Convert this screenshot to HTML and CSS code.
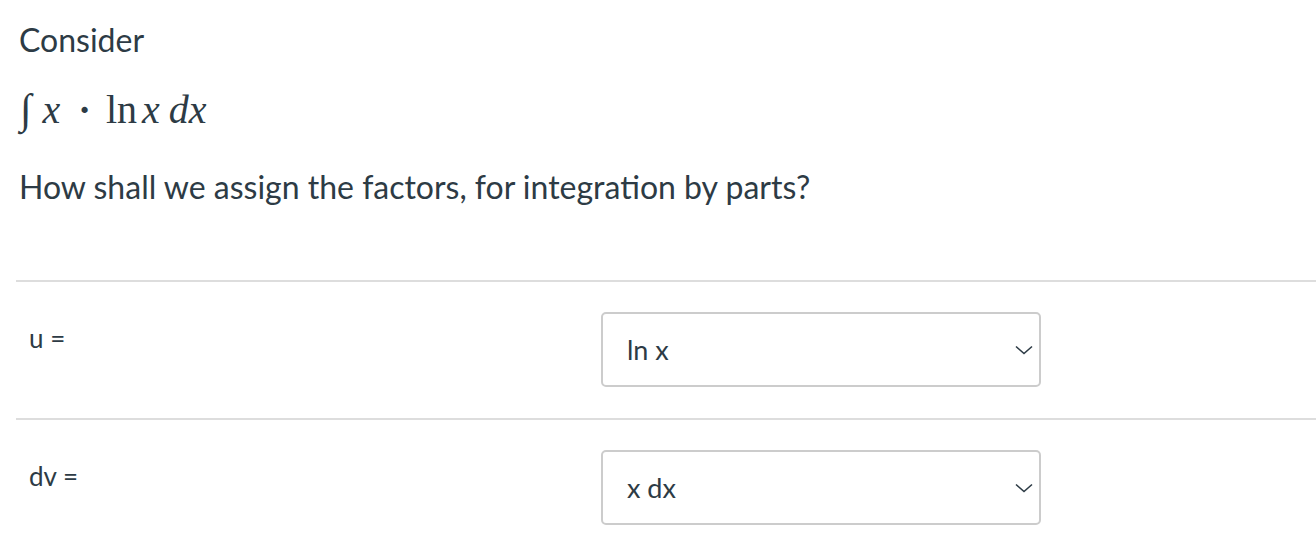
FILE: index.html
```html
<!DOCTYPE html>
<html>
<head>
<meta charset="utf-8">
<link rel="stylesheet" href="styles.css">
</head>
<body>
<div class="page">
  <p class="text consider">Consider</p>
  <p class="math"><span class="int">∫</span><i>x</i><span class="dot">·</span><span class="ln">ln</span><i>x</i><span class="sp"></span><i>dx</i></p>
  <p class="text question">How shall we assign the factors, for integration by parts?</p>
  <div class="rows">
    <div class="row">
      <div class="label">u =</div>
      <div class="select"><span class="value">ln x</span>
        <svg class="chev" width="18" height="10" viewBox="0 0 18 10"><path d="M1 1.5 L9 8.5 L17 1.5" fill="none" stroke="#2d3b45" stroke-width="1.6"/></svg>
      </div>
    </div>
    <div class="row">
      <div class="label">dv =</div>
      <div class="select"><span class="value">x dx</span>
        <svg class="chev" width="18" height="10" viewBox="0 0 18 10"><path d="M1 1.5 L9 8.5 L17 1.5" fill="none" stroke="#2d3b45" stroke-width="1.6"/></svg>
      </div>
    </div>
  </div>
</div>
</body>
</html>
```

FILE: styles.css
```css
html, body {
  margin: 0;
  padding: 0;
  background: #fff;
}
.page {
  padding: 20px 0 0 16px;
  color: #2d3b45;
  font-family: Lato, "Liberation Sans", sans-serif;
}
.text {
  margin: 0 0 0 3px;
  font-size: 32px;
  line-height: 40px;
}
.math {
  margin: 29px 0 0 4px;
  font-family: "Liberation Serif", serif;
  font-size: 38px;
  line-height: 40px;
  height: 40px;
  display: flex;
  align-items: baseline;
}
.math i {
  font-family: "Liberation Serif", serif;
  font-style: italic;
  font-size: 40px;
}
.math .int {
  font-family: "Liberation Serif", serif;
  font-style: italic;
  font-size: 42px;
  margin-right: 11px;
}
.math .dot {
  margin: 0 15px 0 18px;
  font-weight: bold;
}
.math .ln {
  font-size: 40px;
  margin-right: 5px;
}
.math .sp { width: 9px; }
.question {
  margin-top: 38px;
}
.rows {
  margin-top: 73px;
}
.row {
  display: flex;
  align-items: flex-start;
  border-top: 2px solid #dddddd;
  padding: 30px 0 31px 0;
}
.label {
  width: 572px;
  font-size: 26px;
  line-height: 32px;
  padding-top: 10px;
  padding-left: 13px;
}
.select {
  height: 71px;
  border: 2px solid #cccccc;
  border-radius: 5px;
  display: flex;
  align-items: center;
  justify-content: space-between;
  padding: 0 0 0 24px;
  box-sizing: content-box;
  width: 412px;
}
.value {
  font-size: 27px;
  line-height: 32px;
}
.chev {
  margin-right: 6px;
}
```
